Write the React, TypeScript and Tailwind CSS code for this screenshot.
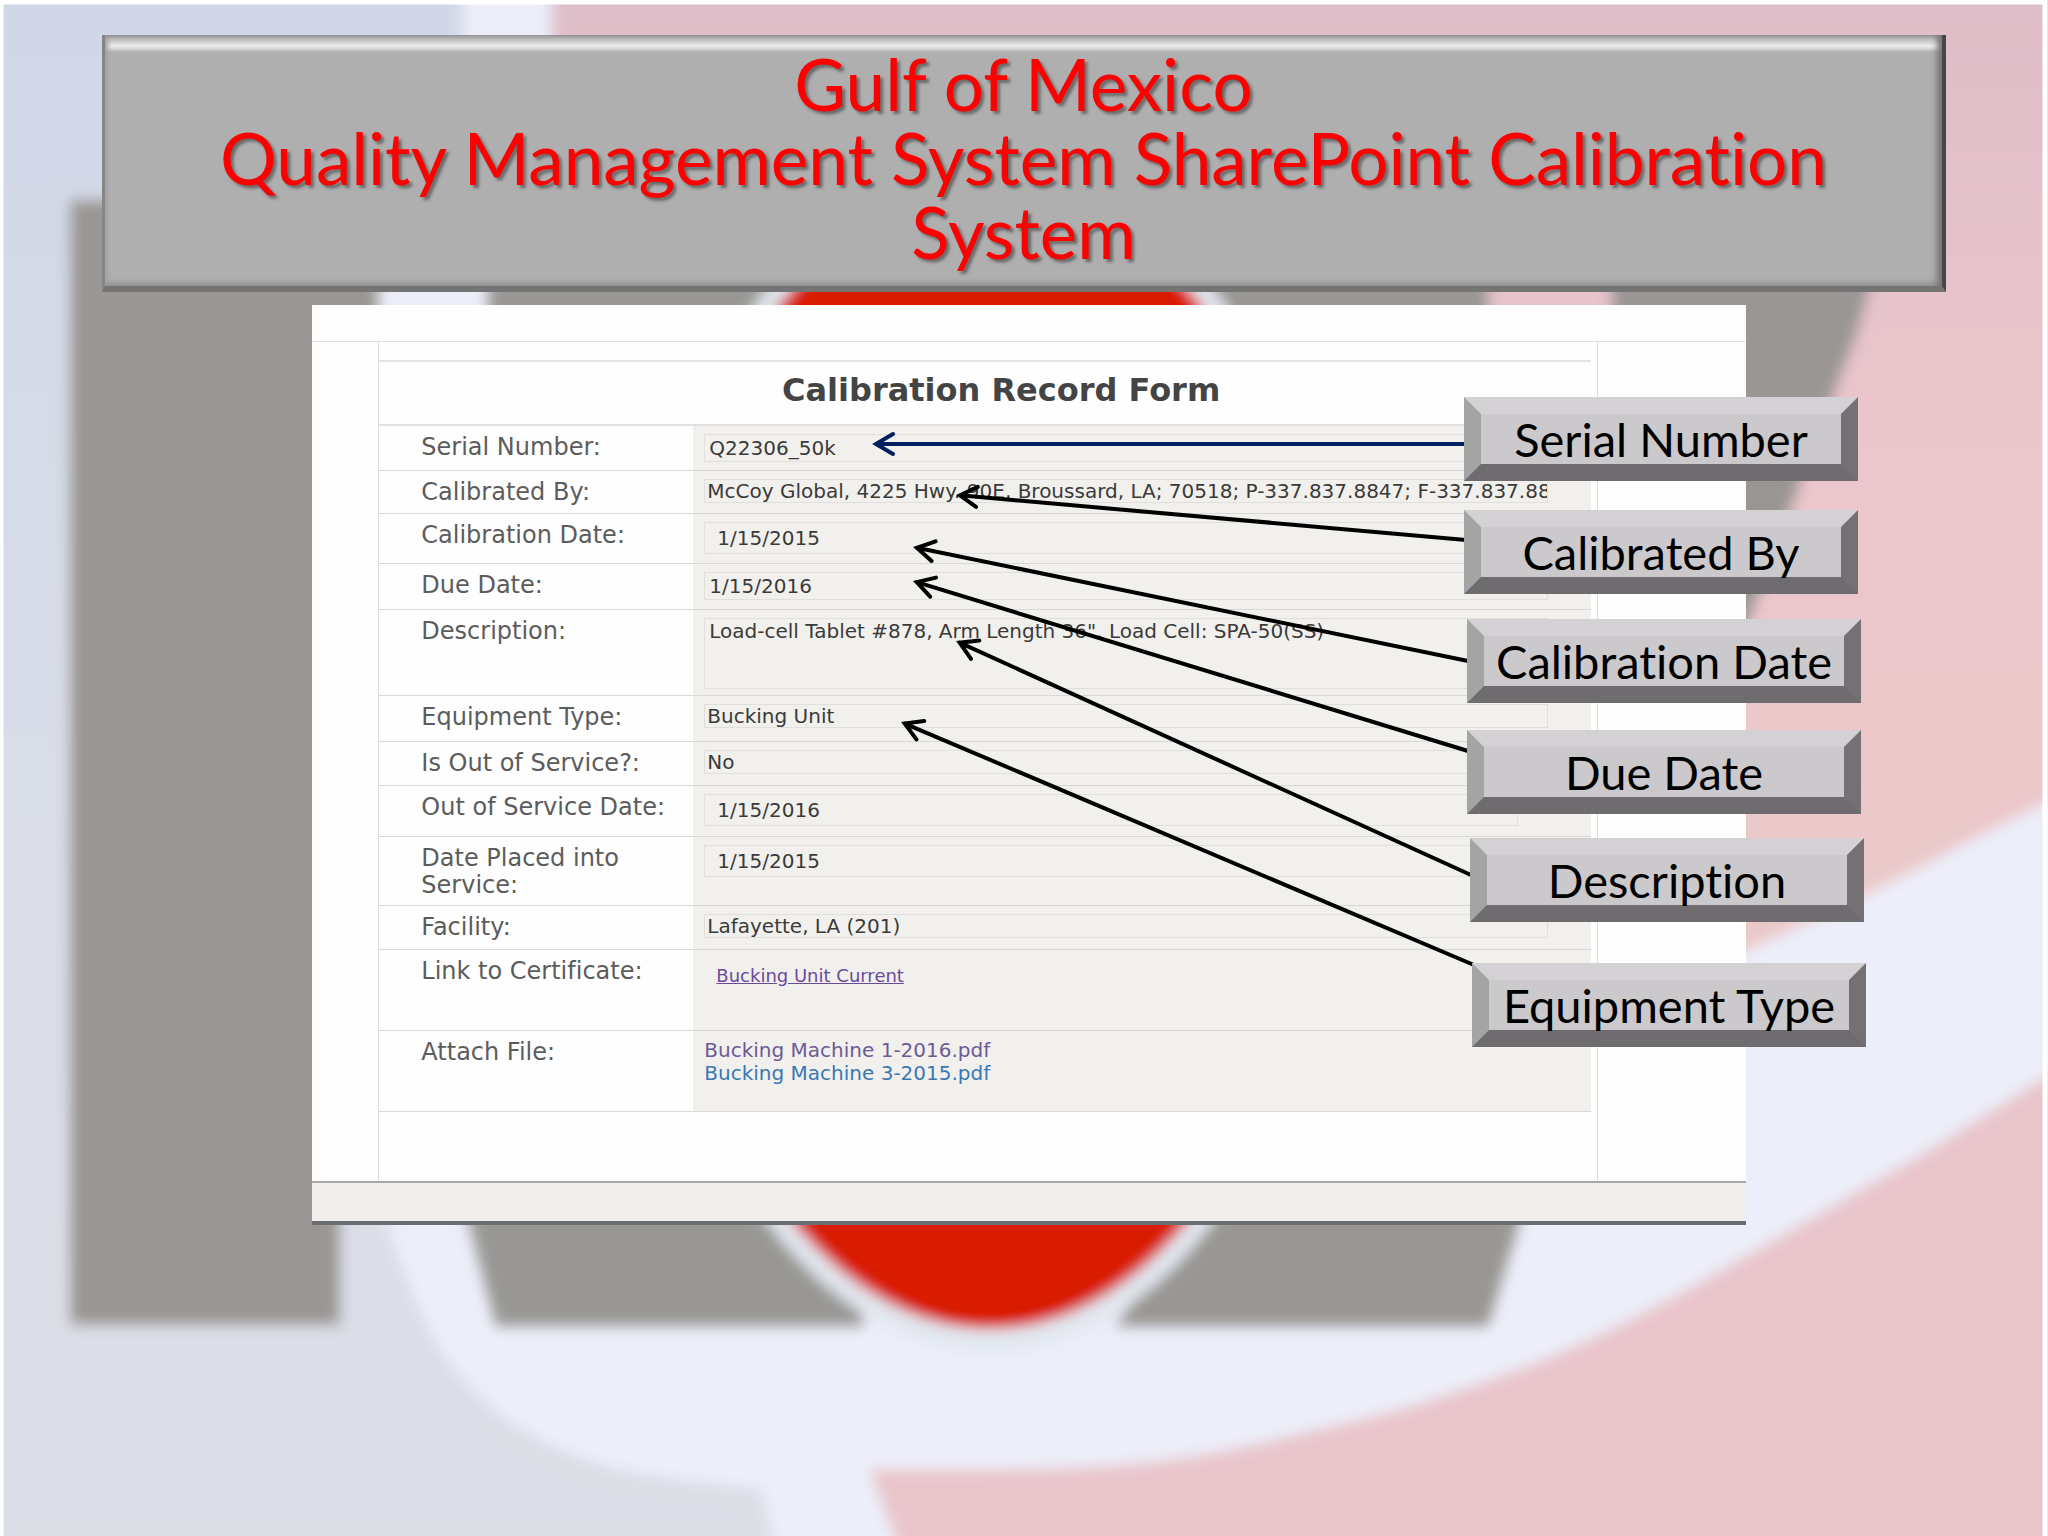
import clsx from "clsx";

type Field = {
  id: string;
  label: string;
  value?: string;
  kind?: "text" | "area" | "link" | "files";
  row: string;
  input?: string;
};

type Callout = {
  text: string;
  x: number;
  y: number;
  // arrow tip and tail
  tip: [number, number];
  tail: [number, number];
  color: string;
};

const SLIDE_W = 2048;
const SLIDE_H = 1536;

const fields: Field[] = [
  { id: "serial", label: "Serial Number:", value: "Q22306_50k", row: "min-h-[45px]", input: "h-7 w-[844px] pl-1" },
  {
    id: "by",
    label: "Calibrated By:",
    value: "McCoy Global, 4225 Hwy. 90E, Broussard, LA; 70518; P-337.837.8847; F-337.837.8848",
    row: "min-h-[43px]",
    input: "h-6 w-[844px] pl-0.5",
  },
  { id: "date", label: "Calibration Date:", value: "1/15/2015", row: "min-h-[50px]", input: "h-8 w-[844px] pl-3" },
  { id: "due", label: "Due Date:", value: "1/15/2016", row: "min-h-[46px]", input: "h-7 w-[844px] pl-1" },
  {
    id: "desc",
    label: "Description:",
    value: 'Load-cell Tablet #878, Arm Length 36". Load Cell: SPA-50(SS)',
    kind: "area",
    row: "min-h-[86px]",
    input: "h-[71px] w-[844px] pl-1",
  },
  { id: "type", label: "Equipment Type:", value: "Bucking Unit", row: "min-h-[46px]", input: "h-6 w-[844px] pl-0.5" },
  { id: "out", label: "Is Out of Service?:", value: "No", row: "min-h-[44px]", input: "h-6 w-[844px] pl-0.5" },
  { id: "outDate", label: "Out of Service Date:", value: "1/15/2016", row: "min-h-[51px]", input: "h-8 w-[814px] pl-3" },
  {
    id: "placed",
    label: "Date Placed into Service:",
    value: "1/15/2015",
    row: "min-h-[69px]",
    input: "h-8 w-[814px] pl-3",
  },
  { id: "facility", label: "Facility:", value: "Lafayette, LA (201)", row: "min-h-[44px]", input: "h-6 w-[844px] pl-0.5" },
  { id: "cert", label: "Link to Certificate:", kind: "link", row: "min-h-[81px]" },
  { id: "files", label: "Attach File:", kind: "files", row: "min-h-[81px]" },
];

const callouts: Callout[] = [
  { text: "Serial Number", x: 1464, y: 397, tip: [872, 444], tail: [1466, 444], color: "#002060" },
  { text: "Calibrated By", x: 1464, y: 510, tip: [956, 495], tail: [1466, 540], color: "#000" },
  { text: "Calibration Date", x: 1467, y: 619, tip: [913, 547], tail: [1468, 661], color: "#000" },
  { text: "Due Date", x: 1467, y: 730, tip: [913, 581], tail: [1468, 751], color: "#000" },
  { text: "Description", x: 1470, y: 838, tip: [956, 641], tail: [1471, 875], color: "#000" },
  { text: "Equipment Type", x: 1472, y: 963, tip: [901, 722], tail: [1474, 965], color: "#000" },
];

const Backdrop = () => (
  <svg
    aria-hidden="true"
    className="absolute inset-0 h-full w-full"
    viewBox="0 0 2048 1536"
    preserveAspectRatio="none"
  >
    <defs>
      <filter id="soft" x="-10%" y="-10%" width="120%" height="120%">
        <feGaussianBlur stdDeviation="7" />
      </filter>
      <linearGradient id="lavender" x1="0" y1="0" x2="0" y2="1">
        <stop offset="0" stopColor="#d1d7e7" />
        <stop offset="0.5" stopColor="#d9dde8" />
        <stop offset="1" stopColor="#dcdee6" />
      </linearGradient>
      <linearGradient id="pink" x1="0" y1="0" x2="0" y2="1">
        <stop offset="0" stopColor="#ddbdc8" />
        <stop offset="0.5" stopColor="#ebc6cc" />
        <stop offset="1" stopColor="#ebc8c8" />
      </linearGradient>
    </defs>
    <rect width="2048" height="1536" fill="#eceef9" />
    <g filter="url(#soft)">
      <path
        d="M-40-40H462V60L372 300V1180C390 1235 412 1300 440 1350C480 1410 540 1450 620 1470C670 1480 720 1484 762 1490L780 1580H-40Z"
        fill="url(#lavender)"
      />
      <path d="M552-40H2090V782C1980 830 1860 905 1720 960L1300 900L490 330L552 60Z" fill="url(#pink)" />
      <path
        d="M870 1470C960 1470 1060 1470 1100 1467C1180 1462 1240 1450 1305 1433C1350 1423 1400 1412 1442 1397C1500 1377 1550 1360 1604 1333C1640 1315 1680 1295 1710 1277C1740 1260 1770 1243 1801 1225L1925 1153L2090 1050V1580H912Z"
        fill="#e9c5cb"
      />
      <path d="M70 200H384L340 900V1325H70Z" fill="#9a9693" />
      <path d="M490 230H790L700 760L865 1326H496L463 1200Z" fill="#999794" />
      <path d="M1200 230H1488V800L1526 1200L1488 1326H1115L1260 1130Z" fill="#999693" />
      <path d="M1608 230H1885L1858 330L1738 650L1640 800Z" fill="#9a9694" />
      <ellipse cx="990" cy="755" rx="346" ry="586" fill="none" stroke="#e2e8f0" strokeWidth="22" />
      <ellipse cx="990" cy="755" rx="340" ry="574" fill="#d91c04" />
    </g>
    <rect x="1" y="2" width="2044" height="1540" fill="none" stroke="#fff" strokeWidth="5" />
  </svg>
);

const Arrows = () => (
  <svg
    aria-hidden="true"
    className="pointer-events-none absolute inset-0 h-full w-full"
    viewBox="0 0 2048 1536"
    preserveAspectRatio="none"
  >
    {callouts.map(({ text, tip, tail, color }) => {
      const angle = (Math.atan2(tail[1] - tip[1], tail[0] - tip[0]) * 180) / Math.PI;
      const length = Math.hypot(tail[0] - tip[0], tail[1] - tip[1]);
      return (
        <path
          key={text}
          d={`M4 0H${length}M21-10L4 0L21 10`}
          transform={`translate(${tip[0]} ${tip[1]}) rotate(${angle})`}
          fill="none"
          stroke={color}
          strokeWidth="4"
          strokeLinecap="round"
        />
      );
    })}
  </svg>
);

const FieldValue = ({ field }: { field: Field }) => {
  const box =
    "block max-w-full resize-none overflow-hidden border border-[#e0dfdd] bg-transparent text-[20px] leading-6 text-[#3a3a3a] outline-none";

  if (field.kind === "link") {
    return (
      <a href="#certificate" className="ml-3 mt-1 block text-[18px] leading-7 text-[#6b4a9c] underline">
        Bucking Unit Current
      </a>
    );
  }
  if (field.kind === "files") {
    return (
      <div className="flex flex-col items-start text-[20px] leading-[23px]">
        <a href="#file-2016" className="text-[#6d5a96]">Bucking Machine 1-2016.pdf</a>
        <a href="#file-2015" className="text-[#3a78b4]">Bucking Machine 3-2015.pdf</a>
      </div>
    );
  }
  if (field.kind === "area") {
    return <textarea id={field.id} defaultValue={field.value} className={clsx(box, field.input)} />;
  }
  return <input id={field.id} type="text" defaultValue={field.value} className={clsx(box, field.input)} />;
};

const RecordForm = () => (
  <section className="ml-[15.25%] mt-[13px] w-[70%] bg-[#fefefe] font-['DejaVu_Sans',sans-serif]">
    <div className="h-[37px] border-b border-[#e2e0e2]" />
    <form className="ml-[66px] mr-[148px] border-x border-[#dedade] pb-[69px] pr-1.5">
      <div className="h-5 border-b-2 border-[#e4e2e6]" />
      <h2 className="border-b-2 border-[#e2e0e2] pb-3.5 pl-8 pt-2 text-center text-[32px] font-bold leading-10 text-[#444]">
        Calibration Record Form
      </h2>
      {fields.map((field) => {
        const label = "pl-[42px] pt-2 text-[24px] leading-[27px] text-[#5c5c5c]";
        return (
          <div
            key={field.id}
            className={clsx("grid grid-cols-[314px_1fr] border-b border-[#d9d7d7]", field.row)}
          >
            {field.kind === "link" || field.kind === "files" ? (
              <span className={label}>{field.label}</span>
            ) : (
              <label htmlFor={field.id} className={label}>{field.label}</label>
            )}
            <div className="min-w-0 bg-[#f2f0ed] pl-[11px] pt-2">
              <FieldValue field={field} />
            </div>
          </div>
        );
      })}
    </form>
    <div className="h-11 border-b-4 border-t-2 border-b-[#6b6e70] border-t-[#aaa6a8] bg-[#f2eeed]" />
  </section>
);

export default function App() {
  return (
    <main className="relative min-h-screen overflow-hidden pt-[35px] font-['Lato',sans-serif] [font-variant-ligatures:none]">
      <Backdrop />
      <div className="relative">
        <header className="mx-[5%] border-b-[6px] border-l-[3px] border-r-4 border-b-[#747475] border-l-[#858586] border-r-[#484647] bg-[#b0afb0] bg-[linear-gradient(to_bottom,#9d9b9c_0,#c4c3c4_5px,#ececec_11px,#d6d6d6_14px,#b0afb0_17px,#b0afb0_calc(100%-8px),#9a999a_100%)] px-16 pb-[17px] pt-3 shadow-[inset_-7px_0_6px_-2px_#737473,inset_4px_0_4px_-1px_#a3a2a3]">
          <h1 className="text-center text-[71px] leading-[74px] text-[#fe0000] [text-shadow:3px_3px_3px_rgba(60,60,60,0.6)]">
            Gulf of Mexico
            <br />
            Quality Management System SharePoint Calibration System
          </h1>
        </header>
        <RecordForm />
      </div>
      <Arrows />
      {callouts.map(({ text, x, y }) => (
        <div
          key={text}
          className="absolute flex h-[84px] w-[394px] items-center justify-center whitespace-nowrap border-[17px] border-b-[#6e6c6f] border-l-[#a5a4a5] border-r-[#737174] border-t-[#d3d1d3] bg-[#cbc9cc] text-[47px] leading-none text-black"
          style={{ left: `${(x / SLIDE_W) * 100}%`, top: `${(y / SLIDE_H) * 100}%` }}
        >
          {text}
        </div>
      ))}
    </main>
  );
}
